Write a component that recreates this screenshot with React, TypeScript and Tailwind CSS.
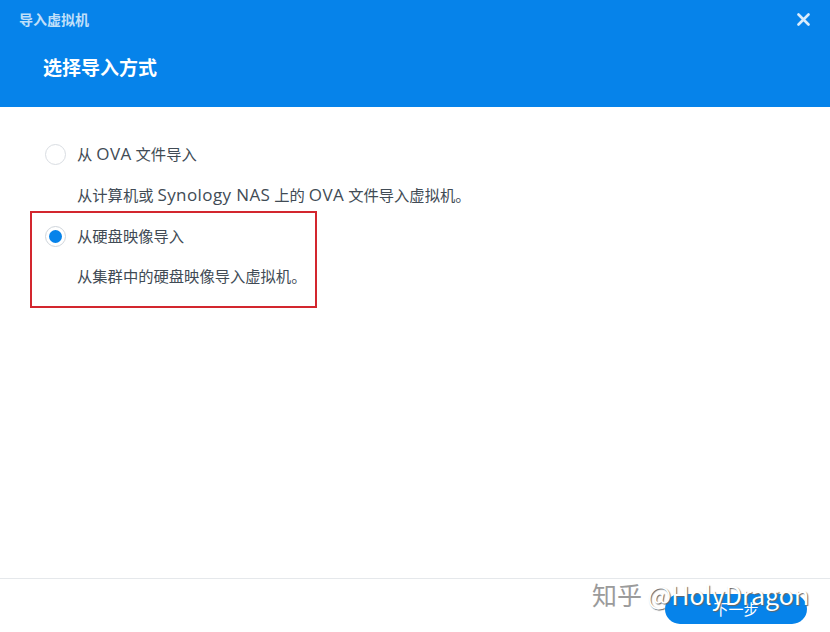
export default function App() {
  const latin = "text-[17px] tracking-[0.4px]";
  return (
    <div
      className="relative w-[830px] h-[632px] bg-white flex flex-col overflow-hidden"
      style={{ fontFamily: '"Open Sans", "Noto Sans CJK SC", sans-serif' }}
    >
      {/* 标题栏 */}
      <div className="bg-[#0683ea] h-[107px] shrink-0 relative">
        <div className="flex items-center justify-between pl-[19px] pr-[20px] h-[38px]">
          <span className="text-[14px] font-bold text-white/75">导入虚拟机</span>
          <svg width="13" height="13" viewBox="0 0 13 13">
            <path d="M1.5 1.5 L11.5 11.5 M11.5 1.5 L1.5 11.5" stroke="#ffffff" strokeOpacity="0.85" strokeWidth="2.6" strokeLinecap="round" />
          </svg>
        </div>
        <div className="pl-[43px] pt-[17px] text-[19px] font-bold text-white leading-[26px]">选择导入方式</div>
      </div>

      {/* 选项 */}
      <div className="flex-1 pt-[34px] pl-[30px]">
        <div className="pl-[15px]">
          <div className="flex items-center h-[26px]">
            <span className="w-[21px] h-[21px] rounded-full border border-[#d9dde2] bg-white shrink-0" />
            <span className="ml-[11px] text-[15.3px] text-[#414b55] whitespace-nowrap">
              从 <span className={latin}>OVA</span> 文件导入
            </span>
          </div>
          <div className="ml-[32px] mt-[15px] h-[26px] flex items-center text-[15.3px] text-[#414b55] whitespace-nowrap">
            <span>
              从计算机或 <span className={latin}>Synology NAS</span> 上的 <span className={latin}>OVA</span> 文件导入虚拟机。
            </span>
          </div>
        </div>
        <div className="mt-[3px] w-[287px] h-[97px] border-2 border-[#d3262e] pl-[13px] pt-[10px]">
          <div className="flex items-center h-[26px]">
            <span className="w-[21px] h-[21px] rounded-full border border-[#cfd5db] bg-white shrink-0 flex items-center justify-center">
              <span className="w-[13px] h-[13px] rounded-full bg-[#0683ea]" />
            </span>
            <span className="ml-[11px] text-[15.3px] text-[#414b55]">从硬盘映像导入</span>
          </div>
          <div className="ml-[32px] mt-[14px] h-[26px] flex items-center text-[15.3px] text-[#414b55]">
            从集群中的硬盘映像导入虚拟机。
          </div>
        </div>
      </div>

      {/* 底部 */}
      <div className="h-[54px] shrink-0 border-t border-[#e5e8eb] flex justify-end items-start pr-[23px] pt-[15px]">
        <button className="w-[142px] h-[30px] rounded-full bg-[#0683ea] text-white text-[15px] leading-[30px]">下一步</button>
      </div>

      {/* 水印 */}
      <div
        className="absolute left-[592px] top-[576px] text-[25px] text-[#9b9b9b] whitespace-nowrap"
        style={{ textShadow: '1px 1px 1px #ffffff', fontFamily: '"Noto Sans CJK SC", "Noto Sans", sans-serif' }}
      >
        知乎 <span className="text-white" style={{ textShadow: '1px 1px 1px #666666' }}>@HolyDragon</span>
      </div>
    </div>
  );
}
